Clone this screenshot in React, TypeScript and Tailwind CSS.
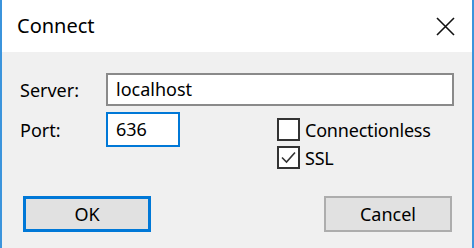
import React from "react";

function Checkbox({ checked, label }: { checked?: boolean; label: string }) {
  return (
    <div className="flex items-center h-[23px]">
      <div className="w-[23px] h-[23px] border-[2px] border-[#333333] bg-white flex items-center justify-center">
        {checked && (
          <svg width="17" height="17" viewBox="0 0 17 17">
            <path d="M2 8.5 L6.5 13 L15 3.5" fill="none" stroke="#333333" strokeWidth="1.6" />
          </svg>
        )}
      </div>
      <span className="ml-[5px] text-[18px] tracking-[-0.2px] leading-none text-black">{label}</span>
    </div>
  );
}

export default function App() {
  return (
    <div
      className="w-[474px] h-[248px] flex flex-col border-x-2 border-[#3b94dc] overflow-hidden"
      style={{ fontFamily: '"Noto Sans", "Open Sans", sans-serif' }}
    >
      <div className="h-[52px] bg-white flex items-center justify-between pl-[15px] pr-[17px] shrink-0">
        <span className="text-[20px] text-black leading-none">Connect</span>
        <svg width="19" height="19" viewBox="0 0 19 19">
          <path d="M1 1 L18 18 M18 1 L1 18" stroke="#111111" strokeWidth="1.6" fill="none" />
        </svg>
      </div>
      <div className="flex-1 bg-[#f0f0f0] flex flex-col pl-[18px] pr-[18px]">
        <div className="flex items-center mt-[21px]">
          <span className="w-[86px] text-[18px] leading-none text-black">Server:</span>
          <div className="w-[348px] h-[33px] bg-white border-2 border-[#8a8a8a] flex items-center pl-[8px] text-[18px] text-black">
            localhost
          </div>
        </div>
        <div className="flex items-start mt-[6px]">
          <div className="flex items-center">
            <span className="w-[86px] text-[18px] leading-none text-black">Port:</span>
            <div className="w-[74px] h-[35px] bg-white border-2 border-[#0078d7] flex items-center pl-[8px] text-[18px] text-black">
              636
            </div>
          </div>
          <div className="ml-[97px] mt-[6px] flex flex-col gap-[5px]">
            <Checkbox label="Connectionless" />
            <Checkbox checked label="SSL" />
          </div>
        </div>
        <div className="flex justify-between mt-[27px] pl-[3px] pr-[2px]">
          <button className="w-[128px] h-[36px] bg-[#e1e1e1] border-[3px] border-[#0078d7] text-[18px] text-black flex items-center justify-center">
            OK
          </button>
          <button className="w-[128px] h-[36px] bg-[#e1e1e1] border-2 border-[#adadad] text-[18px] text-black flex items-center justify-center">
            Cancel
          </button>
        </div>
      </div>
    </div>
  );
}
